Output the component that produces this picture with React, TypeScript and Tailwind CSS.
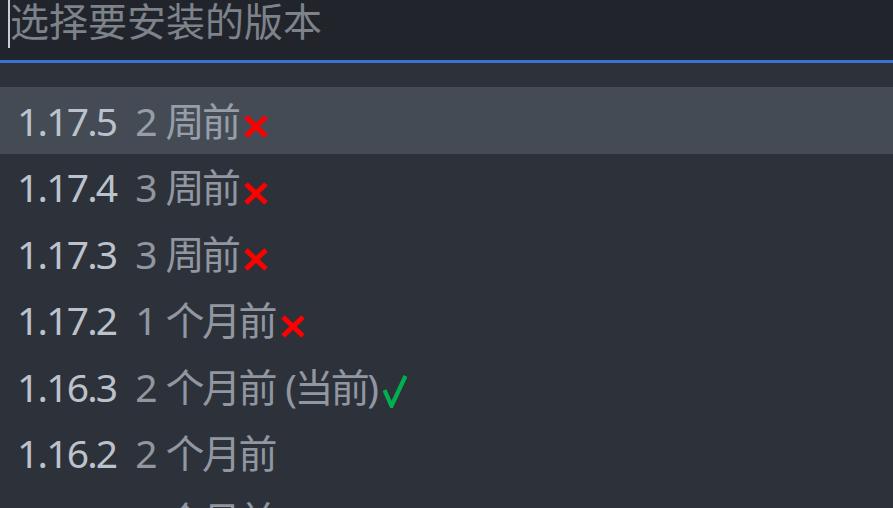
import React from "react";

const RedX = () => (
  <svg width="24" height="23" viewBox="0 0 24 23" className="ml-[6px] mt-[13px] shrink-0">
    <path d="M2 2 L22 21 M22 2 L2 21" stroke="#ff0000" strokeWidth="5" strokeLinecap="butt" fill="none" />
  </svg>
);

const Check = () => (
  <svg width="24" height="33" viewBox="0 0 24 33" className="ml-[7px] mt-[10px] shrink-0">
    <path d="M1.5 15 L8.5 31 L22.5 1" stroke="#00b050" strokeWidth="4.2" fill="none" strokeLinejoin="miter" />
  </svg>
);

type Row = { v: string; d: string; mark?: "x" | "check" };

const rows: Row[] = [
  { v: "1.17.5", d: "2 周前", mark: "x" },
  { v: "1.17.4", d: "3 周前", mark: "x" },
  { v: "1.17.3", d: "3 周前", mark: "x" },
  { v: "1.17.2", d: "1 个月前", mark: "x" },
  { v: "1.16.3", d: "2 个月前 (当前)", mark: "check" },
  { v: "1.16.2", d: "2 个月前" },
  { v: "1.15.1", d: "3 个月前" },
];

export default function App() {
  return (
    <div
      className="w-[893px] h-[508px] overflow-hidden bg-[#2c313a] text-[39px] leading-none"
      style={{ fontFamily: '"Noto Sans", "Noto Sans CJK SC", sans-serif' }}
    >
      <div className="h-[60px] bg-[#21252b] flex items-start pl-[8px]">
        <div className="w-[2px] h-[48px] bg-[#c8ccd4]" />
        <span className="text-[#7d828b] mt-[1px] whitespace-nowrap">选择要安装的版本</span>
      </div>
      <div className="h-[3px] bg-[#3a72d4]" />
      <div className="pt-[24px]">
        {rows.map((r, i) => (
          <div
            key={r.v}
            className={`h-[66.5px] flex items-center pl-[17px] ${i === 0 ? "bg-[#454b55]" : ""}`}
          >
            <span className="text-[#bcc2cc] whitespace-nowrap tracking-[-1.8px]">{r.v}</span>
            <span className="text-[#bcc2cc] opacity-70 ml-[19px] whitespace-nowrap tracking-[-2.6px] [word-spacing:3px]">
              {r.d}
            </span>
            {r.mark === "x" && <RedX />}
            {r.mark === "check" && <Check />}
          </div>
        ))}
      </div>
    </div>
  );
}
